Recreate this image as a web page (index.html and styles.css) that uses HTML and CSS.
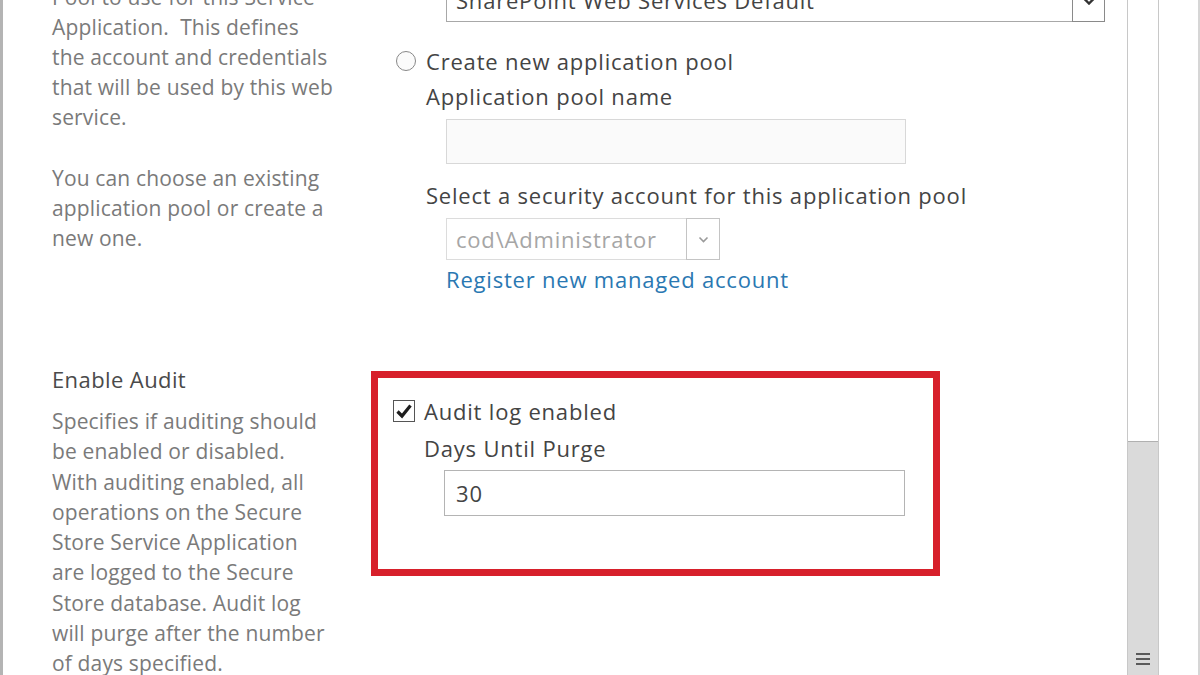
FILE: index.html
```html
<!DOCTYPE html>
<html lang="en">
<head>
    <meta charset="UTF-8">
    <title>New Secure Store Service Application</title>
    <link rel="stylesheet" href="styles.css">
</head>
<body>

    <div class="window">
        <div class="pane">
            <div class="section first">
                <div class="info">
                    <p class="desc">Choose the Application<br>Pool to use for this Service<br>Application.&nbsp; This defines<br>the account and credentials<br>that will be used by this web<br>service.</p>
                    <p class="desc">You can choose an existing<br>application pool or create a<br>new one.</p>
                </div>
                <div class="fields">
                    <div class="select wide">
                        <span class="select-text">SharePoint Web Services Default</span>
                        <span class="select-btn">
                            <svg width="12" height="8" viewBox="0 0 12 8"><path d="M1 1.5 L6 6.5 L11 1.5" fill="none" stroke="#333" stroke-width="2.4"/></svg>
                        </span>
                    </div>

                    <label class="radio-row">
                        <span class="radio"></span>
                        <span>Create new application pool</span>
                    </label>
                    <div class="sub">
                        <div class="field-label">Application pool name</div>
                        <div class="text-input disabled"></div>

                        <div class="field-label spaced">Select a security account for this application pool</div>
                        <div class="select small disabled">
                            <span class="select-text">cod\Administrator</span>
                            <span class="select-btn">
                                <svg width="11" height="7" viewBox="0 0 11 7"><path d="M1.5 1.5 L5.5 5.5 L9.5 1.5" fill="none" stroke="#9a9a9a" stroke-width="1.6"/></svg>
                            </span>
                        </div>
                        <a class="link" href="#">Register new managed account</a>
                    </div>
                </div>
            </div>

            <div class="section audit">
                <div class="info">
                    <h3>Enable Audit</h3>
                    <p class="desc tight">Specifies if auditing should<br>be enabled or disabled.<br>With auditing enabled, all<br>operations on the Secure<br>Store Service Application<br>are logged to the Secure<br>Store database. Audit log<br>will purge after the number<br>of days specified.</p>
                </div>
                <div class="fields">
                    <div class="highlight">
                        <label class="check-row">
                            <span class="checkbox">
                                <svg width="18" height="16" viewBox="0 0 18 16"><path d="M2.5 8.5 L7 13 L15.5 2.5" fill="none" stroke="#1e1e1e" stroke-width="3.2"/></svg>
                            </span>
                            <span>Audit log enabled</span>
                        </label>
                        <div class="field-label purge">Days Until Purge</div>
                        <div class="text-input days">30</div>
                    </div>
                </div>
            </div>
        </div>

        <div class="scrollbar">
            <div class="thumb">
                <span class="grip"></span>
                <span class="grip"></span>
                <span class="grip"></span>
            </div>
        </div>
    </div>

</body>
</html>
```

FILE: styles.css
```css
html, body {
    margin: 0;
    height: 100%;
    overflow: hidden;
    background: #fff;
}
body {
    font-family: "Open Sans", "Noto Sans", sans-serif;
    font-size: 20px;
    color: #444;
}
.window {
    display: flex;
    height: 675px;
    border-left: 3px solid #b4b4b4;
    border-right: 2px solid #d6d6d6;
    box-sizing: border-box;
}
.pane {
    flex: 1;
    padding-left: 49px;
    margin-top: -48px;
}
.section {
    display: grid;
    grid-template-columns: 319px 1fr;
}
.audit {
    margin-top: 70px;
}
.desc {
    margin: 0 0 31px;
    font-size: 21px;
    letter-spacing: 0.15px;
    line-height: 30px;
    color: #7a7a7a;
    white-space: nowrap;
}
.desc.tight {
    line-height: 30.25px;
    margin-top: 12px;
}
h3 {
    margin: 0;
    font-size: 22px;
    letter-spacing: 0.4px;
    font-weight: normal;
    line-height: 30px;
    color: #4a4a4a;
}
.fields {
    padding-left: 25px;
    font-size: 22px;
    letter-spacing: 0.8px;
    white-space: nowrap;
}
.first .fields {
    padding-top: 27px;
}
.select {
    display: flex;
    box-sizing: border-box;
    border: 1px solid #a8a8a8;
    background: #fff;
}
.select.wide {
    width: 659px;
    height: 43px;
    margin-left: 50px;
}
.select-text {
    flex: 1;
    padding-left: 9px;
    line-height: 40px;
    color: #444;
}
.select-btn {
    width: 31px;
    display: flex;
    align-items: center;
    justify-content: center;
    border-left: 1px solid #a8a8a8;
}
.select.wide .select-btn {
    border: 1px solid #8a8a8a;
    margin: -1px -1px -1px 0;
}
.radio-row, .check-row {
    display: flex;
    align-items: center;
    gap: 10px;
    line-height: 30px;
}
.radio-row {
    margin-top: 24px;
}
.radio {
    width: 18px;
    height: 18px;
    border: 1px solid #888;
    border-radius: 50%;
    background: #fbfbfb;
}
.sub {
    padding-left: 30px;
}
.field-label {
    line-height: 30px;
    margin-top: 5px;
}
.field-label.spaced {
    margin-top: 16px;
}
.text-input {
    box-sizing: border-box;
    margin: 8px 0 0 20px;
    width: 460px;
    height: 45px;
    border: 1px solid #d8d8d8;
}
.text-input.disabled {
    background: #fafafa;
}
.select.small {
    margin: 8px 0 0 20px;
    width: 274px;
    height: 42px;
    border-color: #dcdcdc;
}
.select.small .select-text {
    color: #a6a6a6;
}
.select.small .select-btn {
    border: 1px solid #c4c4c4;
    margin: -1px -1px -1px 0;
    width: 32px;
}
.link {
    display: block;
    margin: 4px 0 0 20px;
    line-height: 30px;
    color: #2a78b2;
    text-decoration: none;
}
.highlight {
    margin: 7px 0 0 -25px;
    width: 569px;
    height: 205px;
    box-sizing: border-box;
    border: 7px solid #d7202b;
    padding: 18px 0 0 15px;
}
.check-row {
    gap: 9px;
}
.checkbox {
    width: 20px;
    height: 20px;
    border: 1px solid #555;
    display: flex;
    align-items: center;
    justify-content: center;
    background: #fff;
}
.field-label.purge {
    margin: 7px 0 0 31px;
}
.text-input.days {
    margin: 7px 0 0 51px;
    width: 461px;
    height: 46px;
    border-color: #b4b4b4;
    padding-left: 11px;
    line-height: 44px;
}
.scrollbar {
    width: 30px;
    margin-right: 39px;
    border-left: 1px solid #c8c8c8;
    border-right: 1px solid #c8c8c8;
    display: flex;
    flex-direction: column;
    justify-content: flex-end;
}
.thumb {
    height: 234px;
    background: #dadada;
    border-top: 1px solid #b0b0b0;
    display: flex;
    flex-direction: column;
    align-items: center;
    justify-content: flex-end;
    gap: 3px;
    padding-bottom: 10px;
    box-sizing: border-box;
}
.grip {
    width: 14px;
    height: 2px;
    background: #5a5a5a;
}
```
